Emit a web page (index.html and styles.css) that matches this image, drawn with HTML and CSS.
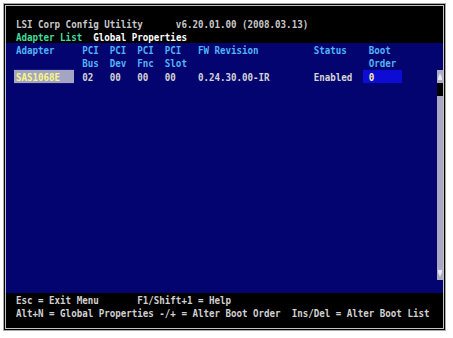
FILE: index.html
```html
<!DOCTYPE html>
<html>
<head>
<meta charset="utf-8">
<link rel="stylesheet" href="styles.css">
</head>
<body>
<div class="frame">
  <div class="inner">
    <div class="row"><span class="gray">LSI Corp Config Utility      v6.20.01.00 (2008.03.13)</span></div>
    <div class="row"><span class="green">Adapter List</span>  <span class="white">Global Properties</span></div>
    <div class="blue">
      <div class="rows">
        <div class="row cyan">Adapter     PCI  PCI  PCI  PCI   FW Revision          Status    Boot</div>
        <div class="row cyan">            Bus  Dev  Fnc  Slot                                 Order</div>
        <div class="row data"><span class="sel">SAS1068E  </span>  02   00   00   00    0.24.30.00-IR        Enabled  <span class="boot"> 0     </span></div>
      </div>
      <div class="scroll">
        <div class="sb-btn"><svg width="4" height="7" viewBox="0 0 4 7"><polygon points="2,0 4,5 0,5" fill="#e8e8f4"/><rect x="0" y="5" width="4" height="2" fill="#e8e8f4"/></svg></div>
        <div class="sb-thumb"></div>
        <div class="sb-track"></div>
        <div class="sb-btn"><svg width="4" height="7" viewBox="0 0 4 7"><rect x="0" y="0" width="4" height="2" fill="#e8e8f4"/><polygon points="0,2 4,2 2,7" fill="#e8e8f4"/></svg></div>
      </div>
    </div>
    <div class="row foot">Esc = Exit Menu       F1/Shift+1 = Help</div>
    <div class="row foot">Alt+N = Global Properties -/+ = Alter Boot Order  Ins/Del = Alter Boot List</div>
  </div>
</div>
</body>
</html>
```
FILE: styles.css
```css
html, body {
  margin: 0;
  padding: 0;
  background: #ffffff;
}
body {
  width: 453px;
  height: 338px;
  overflow: hidden;
}
.frame {
  margin: 3px 0 0 3px;
  width: 443px;
  height: 328px;
  box-sizing: border-box;
  border: 1px solid #a8a8a8;
  background: #000;
  padding: 1px;
}
.inner {
  height: 100%;
  box-sizing: border-box;
  border: 1px solid #c4c4c4;
  display: flex;
  flex-direction: column;
  padding-top: 11px;
  font-family: "DejaVu Sans Mono", "Liberation Mono", monospace;
  font-size: 9.17px;
  font-weight: bold;
}
.row {
  height: 13.14px;
  line-height: 13.14px;
  padding-left: 10px;
  white-space: pre;
  transform: scaleY(1.2);
  flex: none;
}
.gray { color: #c8c8c8; }
.green { color: #44dc9c; }
.white { color: #ffffff; }
.cyan { color: #52b2f6; }
.data { color: #d4d4d4; }
.foot { color: #d0d0d0; }
.sel {
  background: #a4a4c4;
  color: #f8f880;
  padding: 0 3px 0 2px;
  margin: 0 -3px 0 -2px;
}
.boot {
  background: #0c0cd4;
  color: #f4f4a0;
}
.blue {
  background: #040470;
  height: 249.7px;
  flex: none;
  display: flex;
}
.rows {
  flex: 1;
}
.scroll {
  width: 5.5px;
  margin: 26.3px 0.5px 0 0;
  height: 210.2px;
  display: flex;
  flex-direction: column;
}
.sb-btn {
  height: 13.14px;
  background: #acacc8;
  display: flex;
  align-items: center;
  justify-content: center;
  flex: none;
}
.sb-btn svg { display: block; }
.sb-thumb {
  height: 13.14px;
  background: #000;
  flex: none;
}
.sb-track {
  flex: 1;
  background: #a8a8c4;
}
```
